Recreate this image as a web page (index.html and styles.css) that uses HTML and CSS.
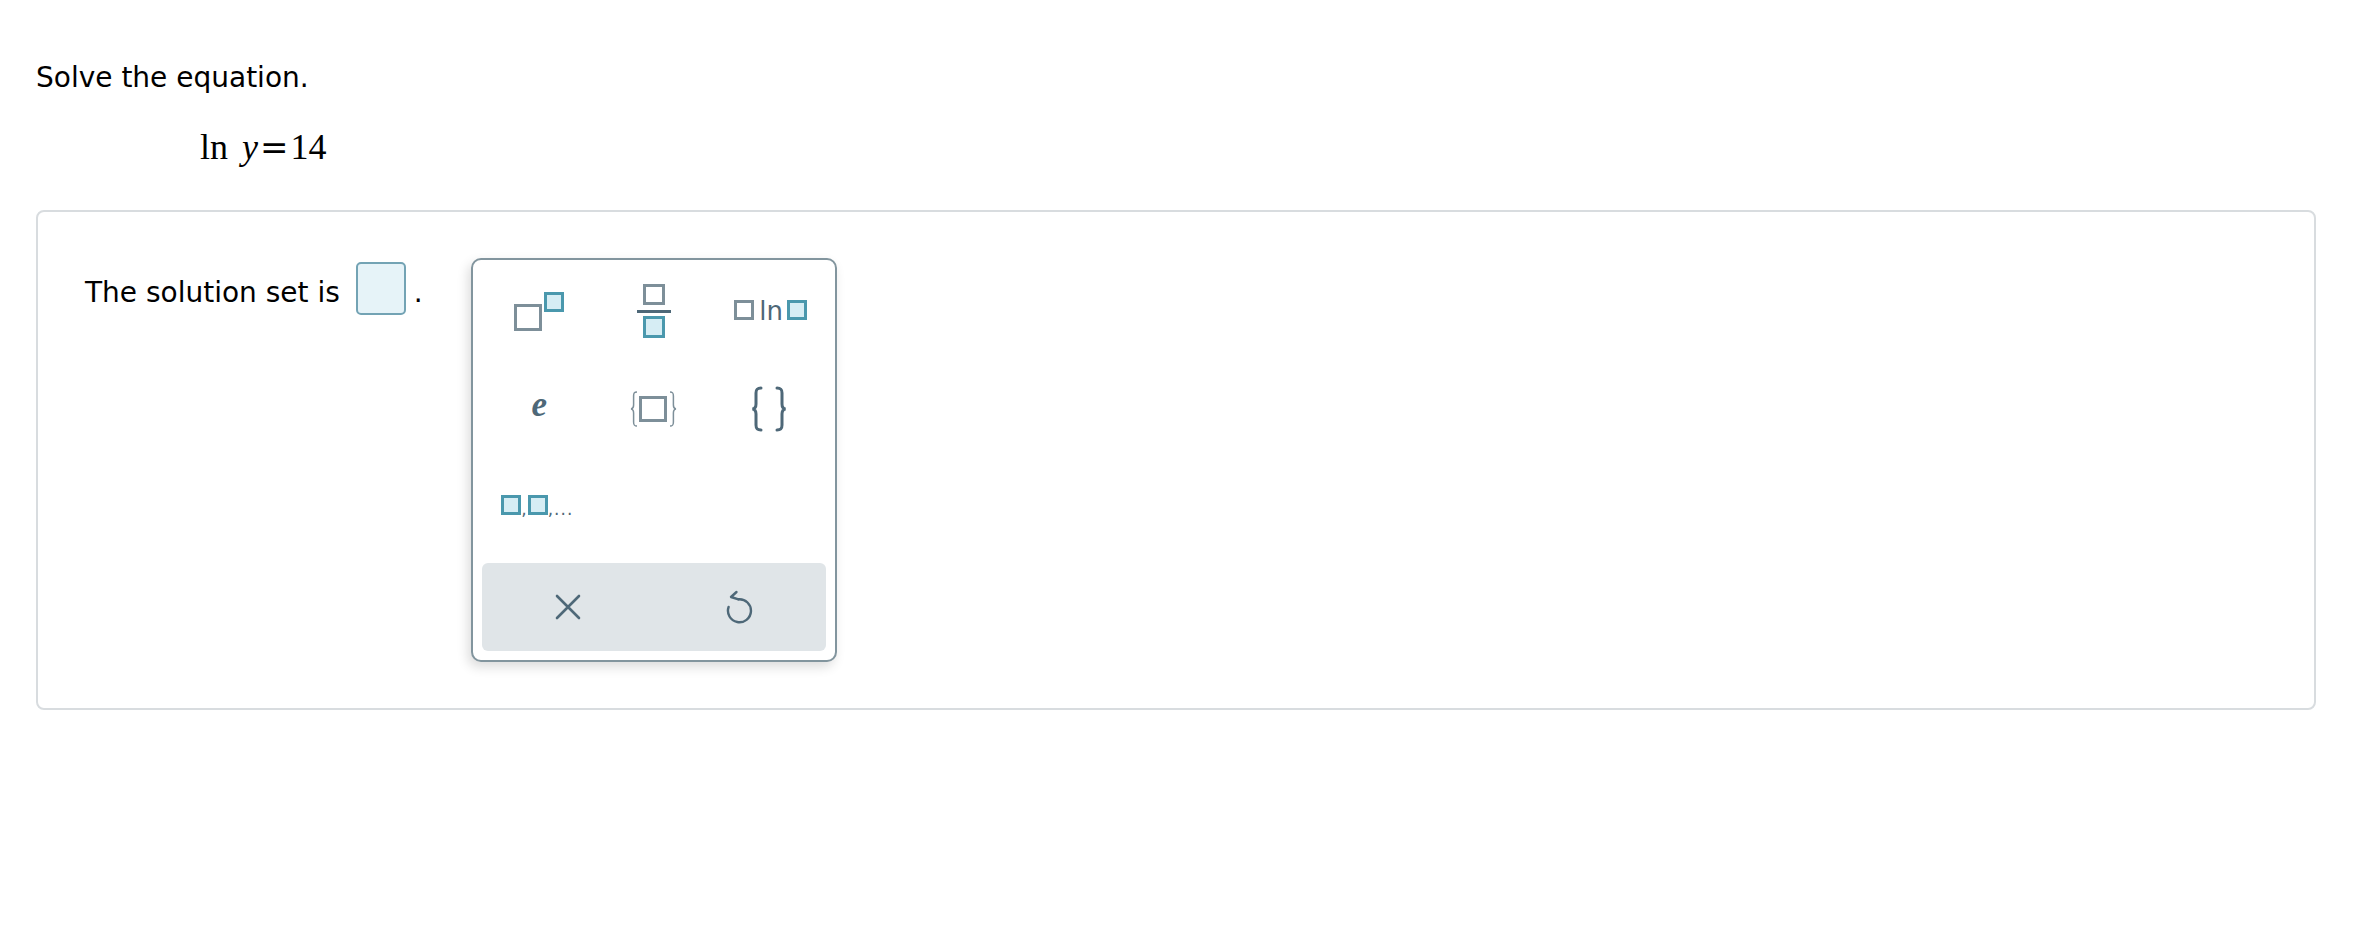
FILE: index.html
```html
<!DOCTYPE html>
<html lang="en">
<head>
<meta charset="utf-8">
<title>Solve the equation</title>
<link rel="stylesheet" href="styles.css">
</head>
<body>
<div class="page">
  <p class="prompt">Solve the equation.</p>
  <div class="equation"><span class="fn">ln</span><span class="var">y</span><span class="op">=</span><span class="num">14</span></div>
  <div class="card">
    <div class="answer-line">
      <span class="answer-text">The solution set is</span>
      <span class="answer-box"></span>
      <span class="period">.</span>
    </div>
    <div class="keypad">
      <div class="keys">
        <div class="key"><span class="sup-icon"><span class="sq sq-base"></span><span class="sq t sq-sup"></span></span></div>
        <div class="key"><span class="frac-icon"><span class="sq sq-num"></span><span class="frac-bar"></span><span class="sq t sq-den"></span></span></div>
        <div class="key"><span class="log-icon"><span class="sq sq-sm"></span><span class="ln">ln</span><span class="sq t sq-sm"></span></span></div>
        <div class="key"><span class="e-icon">e</span></div>
        <div class="key">
          <span class="set-icon">
            <svg class="brace-thin" width="8" height="36" viewBox="0 0 8 36"><path d="M7 1C4.2 1 3.6 2 3.6 5V14C3.6 16.6 2.6 17.8 1 18C2.6 18.2 3.6 19.4 3.6 22V31C3.6 34 4.2 35 7 35" fill="none" stroke="#7d8f99" stroke-width="1.5"/></svg>
            <span class="sq sq-set"></span>
            <svg class="brace-thin" width="8" height="36" viewBox="0 0 8 36"><path d="M1 1C3.8 1 4.4 2 4.4 5V14C4.4 16.6 5.4 17.8 7 18C5.4 18.2 4.4 19.4 4.4 22V31C4.4 34 3.8 35 1 35" fill="none" stroke="#7d8f99" stroke-width="1.5"/></svg>
          </span>
        </div>
        <div class="key">
          <svg width="36" height="46" viewBox="0 0 36 46"><path d="M10 2C6 2 5 3.5 5 7V18C5 21 3.8 22.6 1.5 23C3.8 23.4 5 25 5 28V39C5 42.5 6 44 10 44" fill="none" stroke="#4e6878" stroke-width="3" stroke-linecap="round"/><path d="M26 2C30 2 31 3.5 31 7V18C31 21 32.2 22.6 34.5 23C32.2 23.4 31 25 31 28V39C31 42.5 30 44 26 44" fill="none" stroke="#4e6878" stroke-width="3" stroke-linecap="round"/></svg>
        </div>
        <div class="key"><span class="list-icon"><span class="sq t sq-sm"></span><span class="sep">,</span><span class="sq t sq-sm"></span><span class="sep">,...</span></span></div>
        <div class="key"></div>
        <div class="key"></div>
      </div>
      <div class="actions">
        <div class="action">
          <svg width="26" height="26" viewBox="0 0 26 26"><path d="M2 2L24 24M24 2L2 24" stroke="#4e6878" stroke-width="2.6" stroke-linecap="round"/></svg>
        </div>
        <div class="action">
          <svg width="28" height="34" viewBox="0 0 28 34"><path d="M10.5 2L5 7L12.5 9.3" fill="none" stroke="#4e6878" stroke-width="2.4" stroke-linecap="round" stroke-linejoin="round"/><path d="M12.5 9.3A11.5 11.5 0 1 1 2.6 17" fill="none" stroke="#4e6878" stroke-width="2.4" stroke-linecap="round"/></svg>
        </div>
      </div>
    </div>
  </div>
</div>
</body>
</html>
```

FILE: styles.css
```css
body {
  margin: 0;
  background: #ffffff;
  font-family: "DejaVu Sans", Verdana, sans-serif;
  color: #000000;
}

.page {
  padding: 61px 38px 0 36px;
}

.prompt {
  margin: 0;
  font-size: 28px;
  line-height: 33px;
}

.equation {
  margin: 33px 0 0 164px;
  font-family: "Liberation Serif", "Times New Roman", serif;
  font-size: 36px;
  line-height: 40px;
}

.fn {
  margin-right: 14px;
}

.var {
  font-style: italic;
}

.op {
  margin: 0 2px 0 2px;
  font-family: "DejaVu Serif", serif;
  font-size: 34px;
}

.card {
  position: relative;
  height: 500px;
  box-sizing: border-box;
  margin-top: 43px;
  border: 2px solid #d8dcdf;
  border-radius: 8px;
  background: #ffffff;
}

.answer-line {
  display: flex;
  align-items: flex-start;
  padding: 50px 0 0 47px;
}

.answer-text,
.period {
  font-size: 28px;
  line-height: 33px;
  margin-top: 14px;
}

.answer-box {
  width: 50px;
  height: 53px;
  box-sizing: border-box;
  margin-left: 16px;
  border: 2px solid #73a3b4;
  border-radius: 5px;
  background: #e6f3f8;
}

.period {
  margin-left: 8px;
}

.keypad {
  position: absolute;
  left: 433px;
  top: 46px;
  width: 366px;
  height: 404px;
  box-sizing: border-box;
  padding: 2px 9px 9px;
  border: 2px solid #82959e;
  border-radius: 10px;
  background: #ffffff;
  box-shadow: -3px 5px 12px rgba(0, 0, 0, 0.14);
}

.keys {
  display: grid;
  grid-template-columns: repeat(3, 1fr);
  grid-template-rows: repeat(3, 98px);
}

.key {
  display: flex;
  align-items: center;
  justify-content: center;
}

.sq {
  display: block;
  box-sizing: border-box;
  border: 3px solid #7d8f99;
  background: #ffffff;
}

.sq.t {
  border-color: #4a98ad;
  background: #d6edf4;
}

.sup-icon {
  display: flex;
  align-items: flex-start;
}

.sq-base {
  width: 28px;
  height: 27px;
  margin-top: 12px;
}

.sq-sup {
  width: 20px;
  height: 20px;
  margin-left: 2px;
}

.frac-icon {
  display: flex;
  flex-direction: column;
  align-items: center;
}

.sq-num {
  width: 22px;
  height: 21px;
}

.frac-bar {
  display: block;
  width: 34px;
  height: 3px;
  margin: 5px 0 3px;
  background: #4e6878;
}

.sq-den {
  width: 22px;
  height: 22px;
}

.log-icon {
  display: flex;
  align-items: baseline;
  margin-left: 4px;
}

.sq-sm {
  width: 20px;
  height: 20px;
}

.ln {
  margin: 0 4px 0 5px;
  font-size: 26px;
  line-height: 30px;
  color: #4e6878;
}

.e-icon {
  padding-bottom: 8px;
  font-family: "Liberation Serif", "Times New Roman", serif;
  font-size: 35px;
  font-weight: bold;
  font-style: italic;
  line-height: 40px;
  color: #4e6878;
}

.set-icon {
  display: flex;
  align-items: center;
}

.sq-set {
  width: 28px;
  height: 26px;
  margin: 0 2px 0 1px;
}

.list-icon {
  display: flex;
  align-items: baseline;
  margin-left: -4px;
}

.sep {
  font-size: 17px;
  line-height: 20px;
  letter-spacing: 1px;
  color: #4e6878;
}

.actions {
  display: grid;
  grid-template-columns: 1fr 1fr;
  height: 88px;
  margin-top: 7px;
  border-radius: 6px;
  background: #e0e5e8;
}

.action {
  display: flex;
  align-items: center;
  justify-content: center;
}
```
